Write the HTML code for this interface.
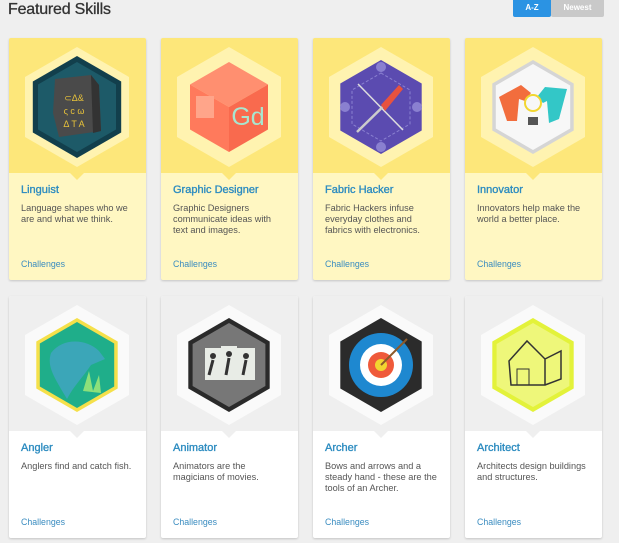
<!DOCTYPE html>
<html><head><meta charset="utf-8"><style>
body{margin:0;width:619px;height:543px;background:#efefef;font-family:"Liberation Sans",sans-serif;overflow:hidden;position:relative}
h1{position:absolute;left:8px;top:1px;margin:0;font-size:16px;font-weight:normal;color:#333;letter-spacing:-0.2px;-webkit-text-stroke:0.3px #333}
.btn{position:absolute;top:0;height:17px;line-height:16px;font-size:8px;font-weight:bold;color:#fff;text-align:center;border-radius:0 0 2px 2px}
.card{position:absolute;width:137px;height:242px;box-shadow:0 1px 2px rgba(0,0,0,.18);border-radius:2px;overflow:hidden}
.img{position:absolute;left:0;top:0;width:137px;height:135px}
.ptr{position:absolute;left:61px;top:135px;width:0;height:0;border-left:7px solid transparent;border-right:7px solid transparent;border-top:7px solid}
.t{position:absolute;left:12px;top:146px;font-size:11px;color:#2d8cc0;-webkit-text-stroke:0.35px #2d8cc0}
.d{position:absolute;left:12px;top:165px;white-space:nowrap;font-size:9.2px;line-height:11.2px;color:#555}
.c{position:absolute;left:12px;top:221px;font-size:8.8px;color:#3a8cc0}
.y{background:#fff7c2}.y .img{background:#fde77a}.y .ptr{border-top-color:#fde77a}
.w{background:#fff}.w .img{background:#efefef}.w .ptr{border-top-color:#efefef}
svg{position:absolute;left:0;top:0}
</style></head><body>
<h1>Featured Skills</h1>
<div class="btn" style="left:513px;width:38px;background:#2b93e3">A-Z</div>
<div class="btn" style="left:551px;width:53px;background:#c9c9c9">Newest</div>

<div class="card y" style="left:9px;top:38px"><div class="img"><svg width="137" height="136"><g transform="translate(68,69)">
<polygon points="0,-60 52,-30 52,30 0,60 -52,30 -52,-30" fill="#fff3b0"/>
<polygon points="0,-51 44.2,-25.5 44.2,25.5 0,51 -44.2,25.5 -44.2,-25.5" fill="#123f4c"/>
<polygon points="0,-45 39,-22.5 39,22.5 0,45 -39,22.5 -39,-22.5" fill="#1d5a68"/>
<path d="M-22,-28 L14,-32 L22,-22 L24,24 L-18,30 L-24,6 Z" fill="#4a4a4a"/><path d="M14,-32 L22,-22 L24,24 L16,26 Z" fill="#333"/>
<text x="-3" y="-6" font-size="9" fill="#e8c23a" text-anchor="middle">⊂Δ&amp;</text>
<text x="-3" y="7" font-size="9" fill="#e8c23a" text-anchor="middle">ς c ω</text>
<text x="-3" y="20" font-size="9" fill="#e8c23a" text-anchor="middle">Δ T A</text>
</g></svg></div><div class="ptr"></div>
<div class="t">Linguist</div><div class="d">Language shapes who we<br>are and what we think.</div><div class="c">Challenges</div></div>

<div class="card y" style="left:161px;top:38px"><div class="img"><svg width="137" height="136"><g transform="translate(68,69)">
<polygon points="0,-60 52,-30 52,30 0,60 -52,30 -52,-30" fill="#fff3b0"/>
<polygon points="0,-45 39,-22.5 0,0 -39,-22.5" fill="#ff8f70"/>
<polygon points="-39,-22.5 0,0 0,45 -39,22.5" fill="#ff7a5c"/>
<polygon points="0,0 39,-22.5 39,22.5 0,45" fill="#f96a4e"/>
<rect x="-33" y="-11" width="18" height="22" fill="#ffa58a"/>
<text x="19" y="18" font-size="25" fill="#a8e6cf" text-anchor="middle">Gd</text>
</g></svg></div><div class="ptr"></div>
<div class="t">Graphic Designer</div><div class="d">Graphic Designers<br>communicate ideas with<br>text and images.</div><div class="c">Challenges</div></div>

<div class="card y" style="left:313px;top:38px"><div class="img"><svg width="137" height="136"><g transform="translate(68,69)">
<polygon points="0,-60 52,-30 52,30 0,60 -52,30 -52,-30" fill="#fff3b0"/>
<polygon points="0,-47 40.7,-23.5 40.7,23.5 0,47 -40.7,23.5 -40.7,-23.5" fill="#5b4bb0"/>
<polygon points="0,-34 29,-17 29,17 0,34 -29,17 -29,-17" fill="none" stroke="#8a80d0" stroke-dasharray="3 2"/>
<line x1="-23" y1="-23" x2="22" y2="23" stroke="#ddd" stroke-width="1.5"/>
<line x1="-24" y1="25" x2="20" y2="-18" stroke="#ccc" stroke-width="2.5"/>
<path d="M0,-2 L18,-22 L22,-18 L4,4 Z" fill="#e8523e"/>
<circle cx="0" cy="-40" r="5" fill="#8a80d0"/><circle cx="0" cy="40" r="5" fill="#8a80d0"/><circle cx="-36" cy="0" r="5" fill="#8a80d0"/><circle cx="36" cy="0" r="5" fill="#8a80d0"/>
</g></svg></div><div class="ptr"></div>
<div class="t">Fabric Hacker</div><div class="d">Fabric Hackers infuse<br>everyday clothes and<br>fabrics with electronics.</div><div class="c">Challenges</div></div>

<div class="card y" style="left:465px;top:38px"><div class="img"><svg width="137" height="136"><g transform="translate(68,69)">
<polygon points="0,-60 52,-30 52,30 0,60 -52,30 -52,-30" fill="#fff3b0"/>
<polygon points="0,-47 40.7,-23.5 40.7,23.5 0,47 -40.7,23.5 -40.7,-23.5" fill="#d5d5d5"/>
<polygon points="0,-43 37.2,-21.5 37.2,21.5 0,43 -37.2,21.5 -37.2,-21.5" fill="#f7f7f7"/>
<path d="M-34,-10 L-12,-22 L-2,-14 L-8,-6 L-14,-8 L-16,14 L-26,14 Z" fill="#f26d3d"/>
<path d="M34,-18 L12,-20 L4,-10 L10,-4 L14,-6 L16,16 L26,12 Z" fill="#33c7c7"/>
<circle cx="0" cy="-4" r="8" fill="none" stroke="#f2d630" stroke-width="2"/>
<rect x="-5" y="10" width="10" height="8" fill="#555"/>
</g></svg></div><div class="ptr"></div>
<div class="t">Innovator</div><div class="d">Innovators help make the<br>world a better place.</div><div class="c">Challenges</div></div>

<div class="card w" style="left:9px;top:296px"><div class="img"><svg width="137" height="136"><g transform="translate(68,69)">
<polygon points="0,-60 52,-30 52,30 0,60 -52,30 -52,-30" fill="#fafafa"/>
<polygon points="0,-47 40.7,-23.5 40.7,23.5 0,47 -40.7,23.5 -40.7,-23.5" fill="#f5e04a"/>
<polygon points="0,-43 37.2,-21.5 37.2,21.5 0,43 -37.2,21.5 -37.2,-21.5" fill="#1fae8a"/>
<path d="M-26,-12 C-14,-28 10,-26 22,-14 L28,-6 L14,0 C6,12 -4,22 -10,34 L-16,24 C-24,10 -30,0 -26,-12 Z" fill="#3ba6b8"/>
<path d="M6,26 L12,6 L16,26 L22,10 L24,28 Z" fill="#8de07a"/>
</g></svg></div><div class="ptr"></div>
<div class="t">Angler</div><div class="d">Anglers find and catch fish.</div><div class="c">Challenges</div></div>

<div class="card w" style="left:161px;top:296px"><div class="img"><svg width="137" height="136"><g transform="translate(68,69)">
<polygon points="0,-60 52,-30 52,30 0,60 -52,30 -52,-30" fill="#fafafa"/>
<polygon points="0,-47 40.7,-23.5 40.7,23.5 0,47 -40.7,23.5 -40.7,-23.5" fill="#2a2a2a"/>
<polygon points="0,-42 36.4,-21 36.4,21 0,42 -36.4,21 -36.4,-21" fill="#777"/>
<rect x="-24" y="-17" width="16" height="32" fill="#e8ece6"/><rect x="-8" y="-19" width="16" height="34" fill="#e8ece6"/><rect x="8" y="-17" width="18" height="32" fill="#e8ece6"/>
<circle cx="-16" cy="-9" r="3" fill="#333"/><circle cx="0" cy="-11" r="3" fill="#333"/><circle cx="17" cy="-9" r="3" fill="#333"/>
<path d="M-16,-5 L-20,10 M0,-7 L-3,10 M17,-5 L14,10" stroke="#333" stroke-width="3"/>
</g></svg></div><div class="ptr"></div>
<div class="t">Animator</div><div class="d">Animators are the<br>magicians of movies.</div><div class="c">Challenges</div></div>

<div class="card w" style="left:313px;top:296px"><div class="img"><svg width="137" height="136"><g transform="translate(68,69)">
<polygon points="0,-60 52,-30 52,30 0,60 -52,30 -52,-30" fill="#fafafa"/>
<polygon points="0,-47 40.7,-23.5 40.7,23.5 0,47 -40.7,23.5 -40.7,-23.5" fill="#2b2b2b"/>
<circle r="32" fill="#1e88d0"/><circle r="21" fill="#fff"/><circle r="13" fill="#ef5a3a"/><circle r="6" fill="#f2d630"/>
<line x1="0" y1="0" x2="26" y2="-26" stroke="#8b5a2b" stroke-width="2"/>
</g></svg></div><div class="ptr"></div>
<div class="t">Archer</div><div class="d">Bows and arrows and a<br>steady hand - these are the<br>tools of an Archer.</div><div class="c">Challenges</div></div>

<div class="card w" style="left:465px;top:296px"><div class="img"><svg width="137" height="136"><g transform="translate(68,69)">
<polygon points="0,-60 52,-30 52,30 0,60 -52,30 -52,-30" fill="#fafafa"/>
<polygon points="0,-47 40.7,-23.5 40.7,23.5 0,47 -40.7,23.5 -40.7,-23.5" fill="#e3f23a"/>
<polygon points="0,-42 36.4,-21 36.4,21 0,42 -36.4,21 -36.4,-21" fill="#eef77a"/>
<path d="M-24,-4 L-6,-24 L12,-6 L12,20 L-22,20 Z M12,-6 L28,-14 L28,14 L12,20" fill="none" stroke="#333" stroke-width="1.5"/>
<rect x="-16" y="4" width="12" height="16" fill="none" stroke="#333"/>
</g></svg></div><div class="ptr"></div>
<div class="t">Architect</div><div class="d">Architects design buildings<br>and structures.</div><div class="c">Challenges</div></div>
</body></html>
